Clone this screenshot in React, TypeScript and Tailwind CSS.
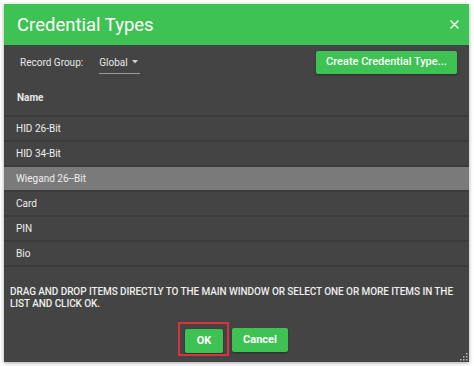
import React from "react";

const rows = ["HID 26-Bit", "HID 34-Bit", "Wiegand 26--Bit", "Card", "PIN", "Bio"];

export default function App() {
  return (
    <div
      className="w-[474px] h-[366px] bg-white pt-[4px] pl-[4px]"
      style={{ fontFamily: "Roboto, 'Liberation Sans', sans-serif" }}
    >
      <div className="relative w-[465px] h-[358px] bg-[#444444] flex flex-col shadow-[0_1px_4px_rgba(0,0,0,0.35)] text-[#eeeeee]">
        {/* header */}
        <div className="h-[41px] bg-[#3ec253] flex items-center justify-between pl-[13px] pr-[10px]">
          <span className="text-[18.5px] text-white leading-none mt-[1px]">Credential Types</span>
          <svg width="9" height="9" viewBox="0 0 9 9">
            <path d="M1 1 L8 8 M8 1 L1 8" stroke="#e6f7e9" strokeWidth="1.7" strokeLinecap="round" />
          </svg>
        </div>
        {/* toolbar */}
        <div className="h-[35px] flex items-center pl-[16px] pr-[12px]">
          <span className="text-[10px] text-[#e8e8e8]">Record Group:</span>
          <div className="ml-[16px] mt-[1px] w-[41px] h-[21px] border-b border-[#9a9a9a] flex items-center justify-between">
            <span className="text-[10px] text-[#e8e8e8]">Global</span>
            <svg width="6" height="4" viewBox="0 0 6 4" className="mr-[2px] mb-[1px]">
              <path d="M0 0 L6 0 L3 3.5 Z" fill="#cfcfcf" />
            </svg>
          </div>
          <div className="flex-1" />
          <button className="w-[141px] h-[23px] bg-[#3ec253] rounded-[2px] text-white text-[11px] font-medium shadow-[0_1px_2px_rgba(0,0,0,0.4)]">
            Create Credential Type...
          </button>
        </div>
        {/* table header */}
        <div className="h-[35px] flex items-center pl-[13px]">
          <span className="text-[10px] font-bold text-[#e8e8e8]">Name</span>
        </div>
        {rows.map((r, i) => (
          <div
            key={r}
            className={`h-[25px] flex items-center pl-[12px] border-t-2 border-[#3b3b3b] text-[10px] ${
              i === 2 ? "bg-[#7a7a7a]" : ""
            }`}
          >
            {r}
          </div>
        ))}
        <div className="h-[2px] bg-[#3b3b3b]" />
        <div className="flex-1" />
        {/* footer */}
        <div className="px-[6px] text-[10px] leading-[12px] tracking-[-0.08px] text-[#eeeeee] font-medium">
          DRAG AND DROP ITEMS DIRECTLY TO THE MAIN WINDOW OR SELECT ONE OR MORE ITEMS IN THE LIST AND CLICK OK.
        </div>
        <div className="h-[24px] mt-[18px] mb-[10px] flex justify-center items-center gap-[9px]">
          <div className="relative">
            <div className="absolute -left-[7px] -top-[5px] w-[51px] h-[34px] border-2 border-[#d9343e] pointer-events-none" />
            <button className="w-[38px] h-[24px] bg-[#3ec253] rounded-[2px] text-white text-[11px] font-bold shadow-[0_1px_2px_rgba(0,0,0,0.4)]">
              OK
            </button>
          </div>
          <button className="w-[56px] h-[24px] bg-[#3ec253] rounded-[2px] text-white text-[11px] font-bold shadow-[0_1px_2px_rgba(0,0,0,0.4)]">
            Cancel
          </button>
        </div>
        {/* resize grip */}
        <svg width="8" height="8" viewBox="0 0 8 8" className="absolute right-[1px] bottom-[1px]">
          <rect x="6" y="0" width="1.5" height="1.5" fill="#bbb" />
          <rect x="3" y="3" width="1.5" height="1.5" fill="#bbb" />
          <rect x="6" y="3" width="1.5" height="1.5" fill="#bbb" />
          <rect x="0" y="6" width="1.5" height="1.5" fill="#bbb" />
          <rect x="3" y="6" width="1.5" height="1.5" fill="#bbb" />
          <rect x="6" y="6" width="1.5" height="1.5" fill="#bbb" />
        </svg>
      </div>
    </div>
  );
}
